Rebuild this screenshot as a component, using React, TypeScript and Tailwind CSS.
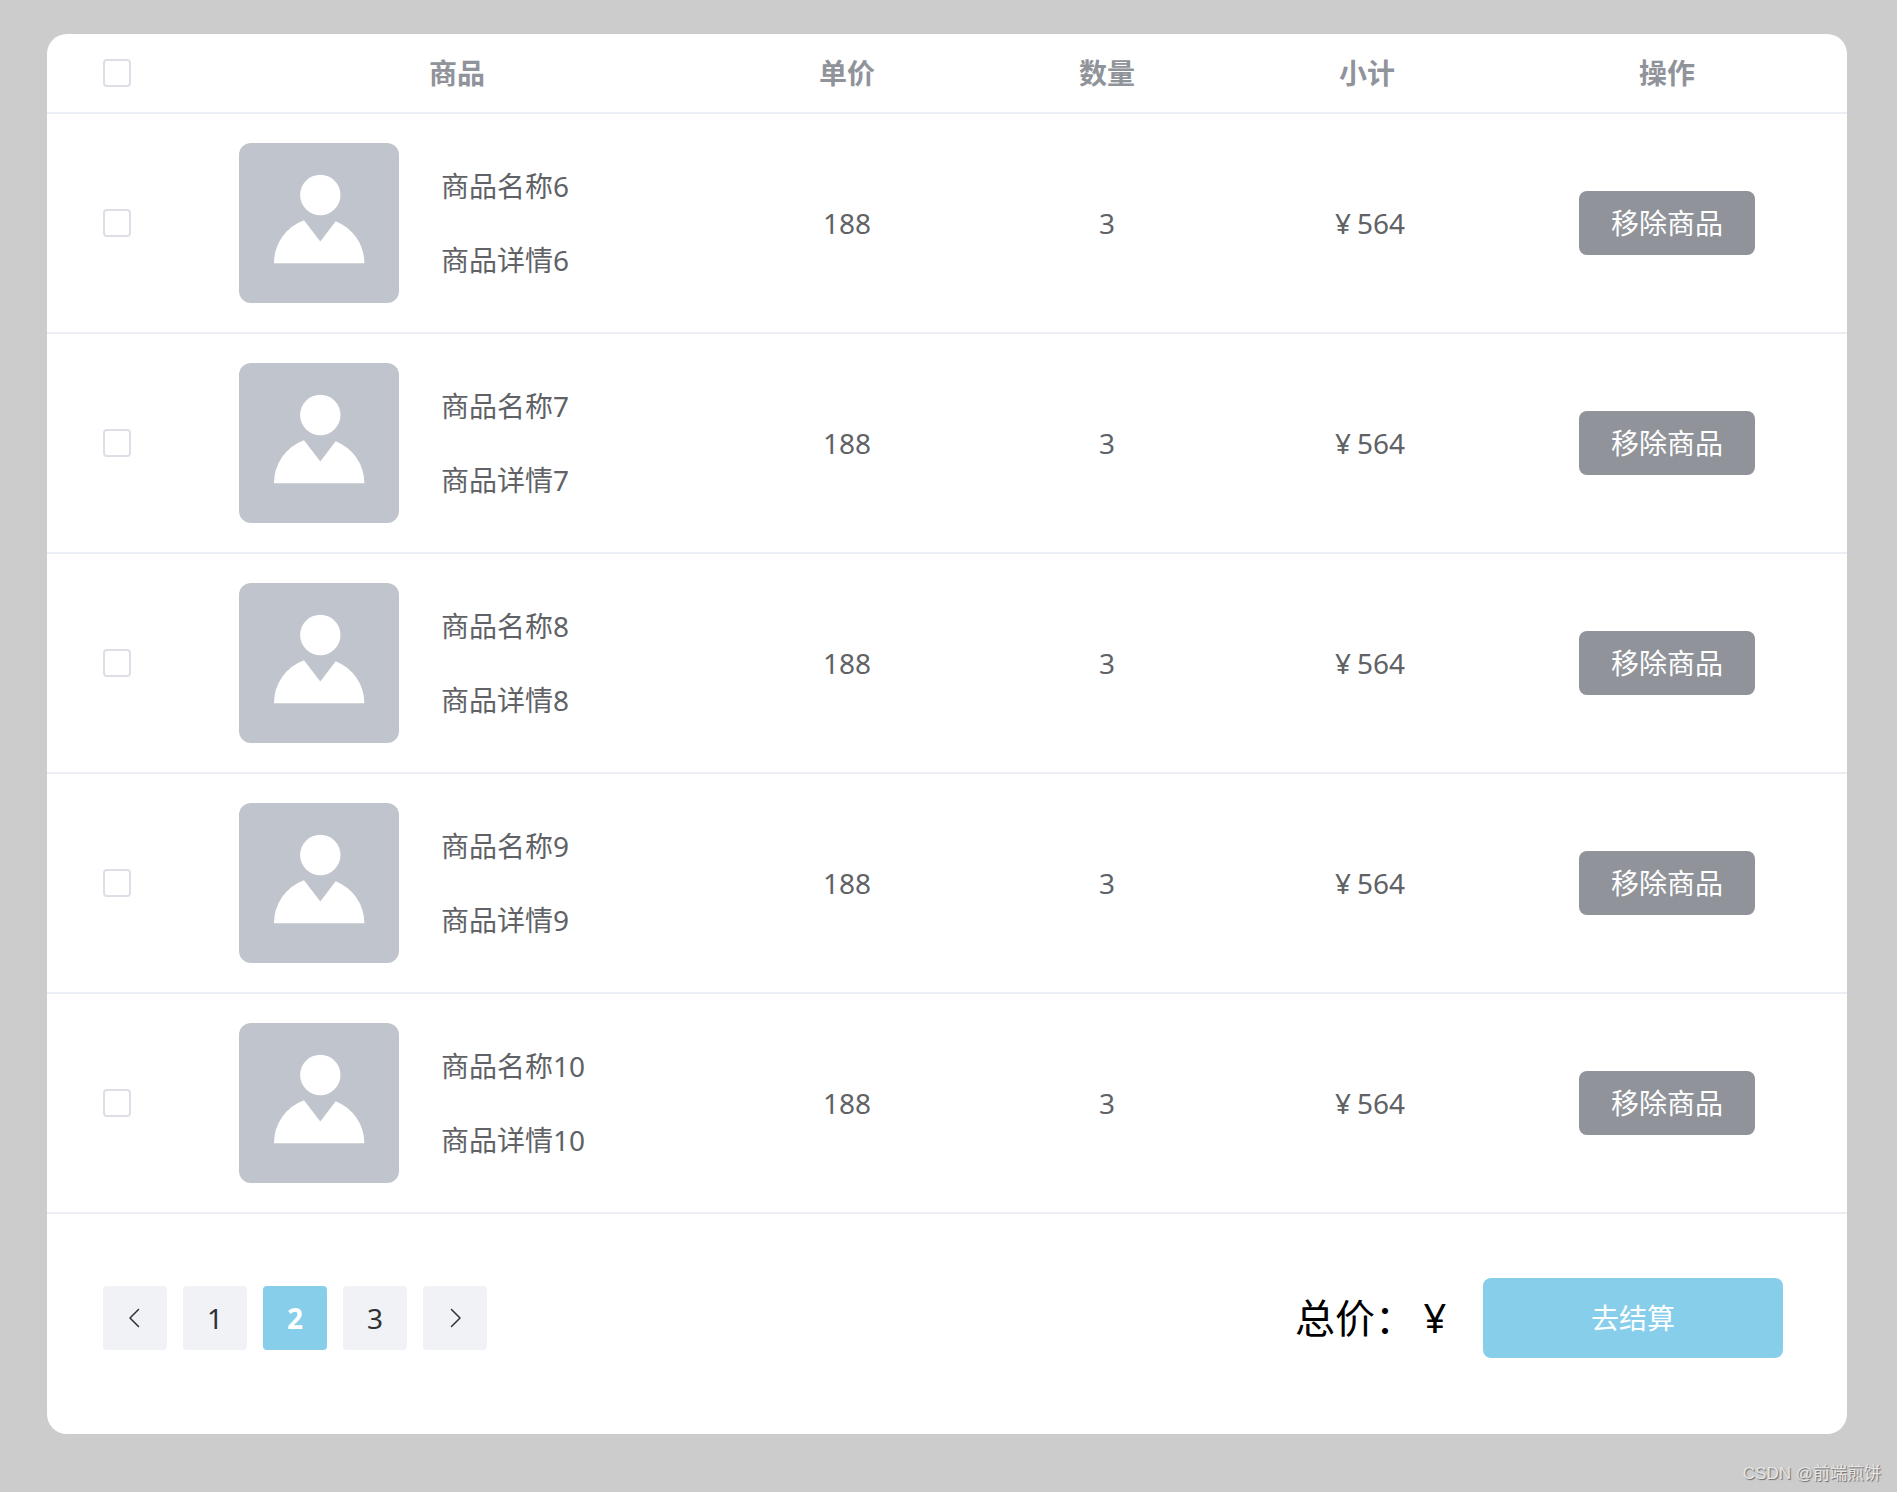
import { useState } from 'react';

type Product = { id: number; price: number; count: number };

const products: Product[] = [6, 7, 8, 9, 10].map((id) => ({ id, price: 188, count: 3 }));

function Checkbox({
  label,
  checked,
  onChange,
}: {
  label: string;
  checked: boolean;
  onChange: () => void;
}) {
  return (
    <input
      type="checkbox"
      aria-label={label}
      checked={checked}
      onChange={onChange}
      className="block size-7 cursor-pointer appearance-none rounded border-2 border-[#dcdfe6] bg-white checked:border-[#87ceeb] checked:bg-[#87ceeb]"
    />
  );
}

function Avatar() {
  return (
    <svg viewBox="0 0 160 160" className="size-40 shrink-0 rounded-xl bg-[#c0c4cc]" aria-hidden="true">
      <circle cx="81.3" cy="52" r="20.2" fill="#fff" />
      <path d="M35 120.3A45.5 45.5 0 0 1 65 77.2L81.3 98.5L96.7 78.2A45.5 45.5 0 0 1 125.4 120.3Z" fill="#fff" />
    </svg>
  );
}

function Chevron({ d }: { d: string }) {
  return (
    <svg viewBox="0 0 24 24" className="size-6" fill="none" stroke="#303133" strokeWidth="1.5" strokeLinecap="round" strokeLinejoin="round" aria-hidden="true">
      <path d={d} />
    </svg>
  );
}

/* Currency sign set in a full-width cell, like the characters around it. */
function Yuan() {
  return <span className="inline-block w-[1em] text-center">¥</span>;
}

const headCell = 'h-20 border-b-2 border-[#ebeef5] text-center font-bold text-[#909399]';
const cell = 'h-[220px] border-b-2 border-[#ebeef5] text-center';
const pageButton = 'flex size-16 items-center justify-center rounded';

export default function App() {
  const [selected, setSelected] = useState<number[]>([]);
  const [page, setPage] = useState(2);
  const allSelected = selected.length === products.length;

  const toggle = (id: number) =>
    setSelected((s) => (s.includes(id) ? s.filter((x) => x !== id) : [...s, id]));

  return (
    <div
      lang="zh-CN"
      className="relative min-h-screen bg-[#cccccc] pt-[34px] pr-[50px] pb-[58px] pl-[47px] font-['Noto_Sans','Noto_Sans_CJK_SC',sans-serif] text-[28px] leading-[42px] text-[#606266]"
    >
      <main className="overflow-hidden rounded-[20px] bg-white">
        <table className="w-full table-fixed border-separate border-spacing-0">
          <colgroup>
            <col className="w-[150px]" />
            <col />
            <col className="w-[260px]" />
            <col className="w-[260px]" />
            <col className="w-[260px]" />
            <col className="w-[350px]" />
          </colgroup>
          <thead>
            <tr>
              <th className={`${headCell} pl-14`}>
                <Checkbox
                  label="全选"
                  checked={allSelected}
                  onChange={() => setSelected(allSelected ? [] : products.map((p) => p.id))}
                />
              </th>
              <th className={headCell}>商品</th>
              <th className={headCell}>单价</th>
              <th className={headCell}>数量</th>
              <th className={headCell}>小计</th>
              <th className={`${headCell} pr-[10px]`}>操作</th>
            </tr>
          </thead>
          <tbody>
            {products.map((p) => (
              <tr key={p.id}>
                <td className={`${cell} pl-14`}>
                  <Checkbox
                    label={`选择商品${p.id}`}
                    checked={selected.includes(p.id)}
                    onChange={() => toggle(p.id)}
                  />
                </td>
                <td className={`${cell} pl-[42px]`}>
                  <div className="flex items-center gap-[42px] text-left">
                    <Avatar />
                    <div className="flex flex-col gap-8">
                      <p>商品名称{p.id}</p>
                      <p>商品详情{p.id}</p>
                    </div>
                  </div>
                </td>
                <td className={cell}>{p.price}</td>
                <td className={cell}>{p.count}</td>
                <td className={cell}>
                  <Yuan />
                  {p.price * p.count}
                </td>
                <td className={`${cell} pr-[10px]`}>
                  <button type="button" className="h-16 w-44 rounded-lg bg-[#909399] text-white">
                    移除商品
                  </button>
                </td>
              </tr>
            ))}
          </tbody>
        </table>

        <footer className="flex items-center justify-between pt-16 pr-16 pb-[76px] pl-14">
          <nav aria-label="分页" className="flex gap-4 text-[#303133]">
            <button type="button" aria-label="上一页" className={`${pageButton} bg-[#f0f2f5]`} onClick={() => setPage(Math.max(1, page - 1))}>
              <Chevron d="M15.5 3.5L7 12l8.5 8.5" />
            </button>
            {[1, 2, 3].map((n) => (
              <button
                key={n}
                type="button"
                aria-current={n === page ? 'page' : undefined}
                onClick={() => setPage(n)}
                className={`${pageButton} ${n === page ? 'bg-[#87ceeb] font-bold text-white' : 'bg-[#f0f2f5]'}`}
              >
                {n}
              </button>
            ))}
            <button type="button" aria-label="下一页" className={`${pageButton} bg-[#f0f2f5]`} onClick={() => setPage(Math.min(3, page + 1))}>
              <Chevron d="M8.5 3.5L17 12l-8.5 8.5" />
            </button>
          </nav>
          <div className="flex items-center gap-7">
            <span className="text-[40px] leading-[60px] text-black">
              总价：
              <Yuan />
            </span>
            <button type="button" className="h-20 w-[300px] rounded-lg bg-[#87ceeb] text-white">
              去结算
            </button>
          </div>
        </footer>
      </main>
      <div className="absolute right-4 bottom-1 font-['Liberation_Sans','Noto_Sans_CJK_SC',sans-serif] text-[17px] leading-7 text-[#e6e6e6] [text-shadow:1px_1px_1px_#6b6b6b]">
        CSDN @前端煎饼
      </div>
    </div>
  );
}
